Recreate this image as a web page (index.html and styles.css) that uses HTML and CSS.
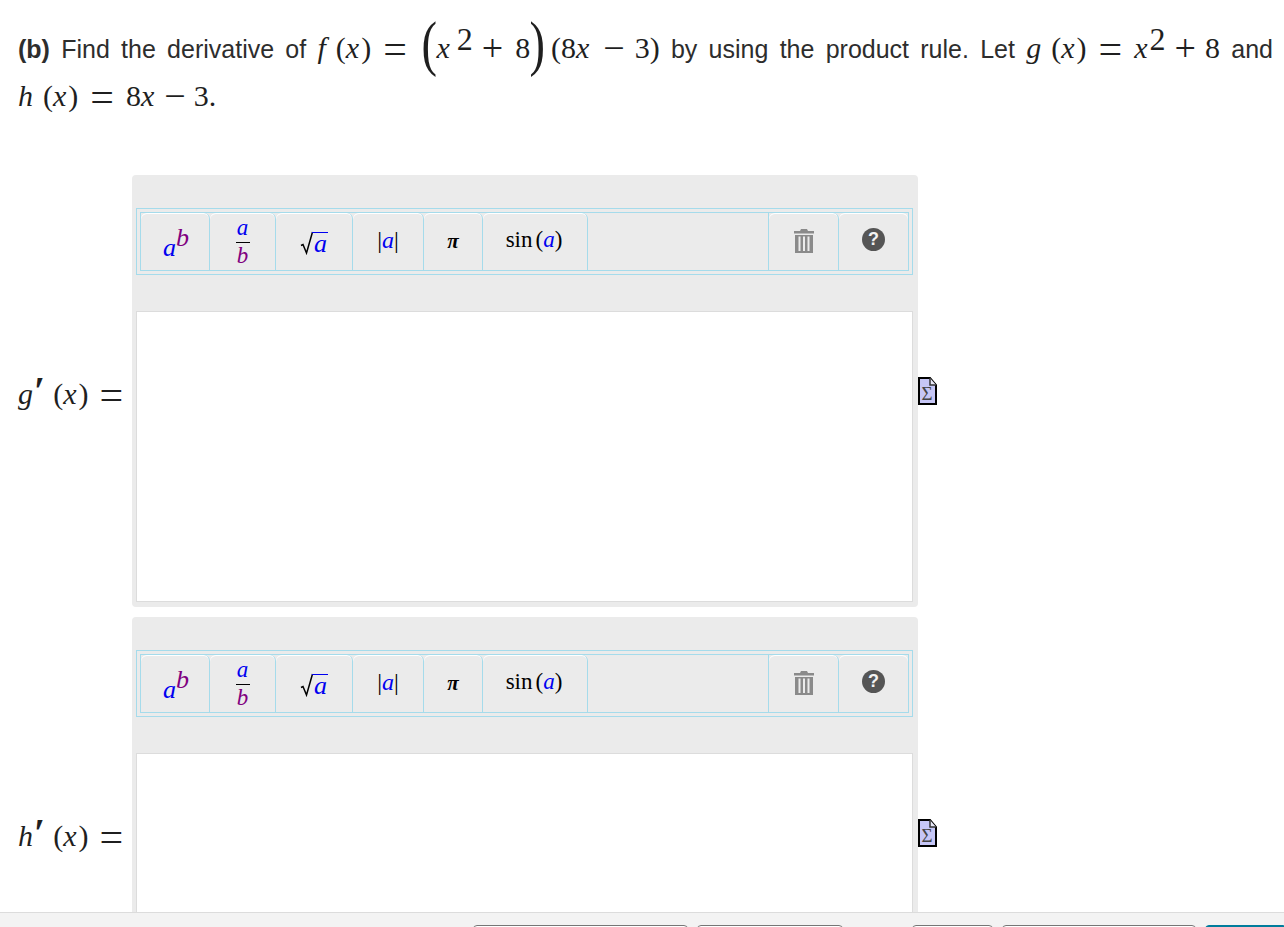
FILE: index.html
```html
<!DOCTYPE html>
<html lang="en">
<head>
<meta charset="utf-8">
<title>Product rule</title>
<link rel="stylesheet" href="styles.css">
</head>
<body>
<main class="page">
  <p class="question"><b>(b)</b> Find the derivative of <span class="m"><i>f</i><span class="th"></span>(<i>x</i>)<span class="rel pad">=</span><span class="big open">(</span><i>x</i><sup class="sq pad">2</sup><span class="bin pad">+</span>8<span class="big close">)</span><span class="th2"></span>(8<i>x</i><span class="bin minus pad">−</span>3)</span> by using the product rule. Let <span class="m"><i>g</i><span class="th"></span>(<i>x</i>)<span class="rel">=</span><i>x</i><sup class="sq">2</sup><span class="bin">+</span>8</span> and <span class="m"><i>h</i><span class="th"></span>(<i>x</i>)<span class="rel">=</span>8<i>x</i><span class="bin minus">−</span>3.</span></p>

  <section class="row">
    <div class="label m"><i>g</i><span class="prime">′</span><span class="th3"></span>(<i>x</i>)<span class="rel">=</span></div>
    <div class="panel">
      <div class="toolbar">
        <div class="tools">
          <div class="tool"><span class="sym pow"><i class="a">a</i><sup class="b">b</sup></span></div>
          <div class="tool"><span class="frac"><i class="a">a</i><i class="bar"></i><i class="b">b</i></span></div>
          <div class="tool"><span class="sym root"><svg class="radical" viewBox="0 0 13 24" width="13" height="24"><path d="M1 14.5 3 13.5 6.5 22 12.5 1" fill="none" stroke="#000" stroke-width="1.5"/></svg><i class="a over">a</i></span></div>
          <div class="tool"><span class="sym abs">|<i class="a">a</i>|</span></div>
          <div class="tool"><span class="sym pi"><i>π</i></span></div>
          <div class="tool"><span class="sym sin">sin<span class="th4"></span>(<i class="a">a</i>)</span></div>
          <div class="tool empty"></div>
          <div class="tool"><svg class="trash" viewBox="0 0 22 25" width="22" height="25"><path fill="#8a8a8a" d="M8 1h6l1 2h6v2.500H1V3h6zM2 7h18v18H2z"/><path fill="#ebebeb" d="M5.500 8.500h2v14.500h-2zM10 8.500h2v14.500h-2zM14.500 8.500h2v14.500h-2z"/></svg></div>
          <div class="tool last"><span class="help">?</span></div>
        </div>
      </div>
      <div class="editor"></div>
    </div>
    <div class="file"><svg class="sheet" viewBox="0 0 19 28" width="19" height="28"><path d="M1 1h11l6 7v19H1z" fill="#c6c6f6" stroke="#000" stroke-width="2"/><path d="M12 1v7h6" fill="#e8e8f8" stroke="#333" stroke-width="1.500"/><text class="sigma" x="9" y="23">Σ</text></svg></div>
  </section>

  <section class="row">
    <div class="label m"><i>h</i><span class="prime">′</span><span class="th3"></span>(<i>x</i>)<span class="rel">=</span></div>
    <div class="panel">
      <div class="toolbar">
        <div class="tools">
          <div class="tool"><span class="sym pow"><i class="a">a</i><sup class="b">b</sup></span></div>
          <div class="tool"><span class="frac"><i class="a">a</i><i class="bar"></i><i class="b">b</i></span></div>
          <div class="tool"><span class="sym root"><svg class="radical" viewBox="0 0 13 24" width="13" height="24"><path d="M1 14.5 3 13.5 6.5 22 12.5 1" fill="none" stroke="#000" stroke-width="1.5"/></svg><i class="a over">a</i></span></div>
          <div class="tool"><span class="sym abs">|<i class="a">a</i>|</span></div>
          <div class="tool"><span class="sym pi"><i>π</i></span></div>
          <div class="tool"><span class="sym sin">sin<span class="th4"></span>(<i class="a">a</i>)</span></div>
          <div class="tool empty"></div>
          <div class="tool"><svg class="trash" viewBox="0 0 22 25" width="22" height="25"><path fill="#8a8a8a" d="M8 1h6l1 2h6v2.500H1V3h6zM2 7h18v18H2z"/><path fill="#ebebeb" d="M5.500 8.500h2v14.500h-2zM10 8.500h2v14.500h-2zM14.500 8.500h2v14.500h-2z"/></svg></div>
          <div class="tool last"><span class="help">?</span></div>
        </div>
      </div>
      <div class="editor"></div>
    </div>
    <div class="file"><svg class="sheet" viewBox="0 0 19 28" width="19" height="28"><path d="M1 1h11l6 7v19H1z" fill="#c6c6f6" stroke="#000" stroke-width="2"/><path d="M12 1v7h6" fill="#e8e8f8" stroke="#333" stroke-width="1.500"/><text class="sigma" x="9" y="23">Σ</text></svg></div>
  </section>
</main>
<footer class="footer">
  <span class="fbtn w215"></span>
  <span class="fbtn w146"></span>
  <span class="fgap"></span>
  <span class="fbtn w81"></span>
  <span class="fbtn w194"></span>
  <span class="fbtn primary"></span>
</footer>
</body>
</html>
```
FILE: styles.css
```css
html, body {
  margin: 0;
  height: 927px;
  overflow: hidden;
  background: #fff;
}
body {
  position: relative;
  color: #2d2d2d;
  font-family: "Liberation Sans", Arial, sans-serif;
}
.page {
  padding: 25px 11px 0 18px;
}
.question {
  margin: 0 0 54px;
  font-size: 25px;
  line-height: 48px;
  text-align: justify;
}
.question b { font-weight: 700; }
.m {
  font-family: "Liberation Serif", "Times New Roman", serif;
  font-size: 30px;
  line-height: 0;
  color: #1f1f1f;
  white-space: nowrap;
}
.m i {
  font-style: italic;
  letter-spacing: 2px;
}
.rel {
  margin: 0 12px;
  font-size: 42px;
  line-height: 0;
  font-weight: 400;
  vertical-align: -5px;
}
.rel.pad { margin-right: 15px; }
.bin {
  margin: 0 9px;
  font-size: 38px;
  line-height: 0;
  vertical-align: -3px;
}
.bin.pad { margin-right: 12px; }
.minus {
  margin: 0 8px;
  vertical-align: -3px;
}
.minus.pad { margin: 0 10px 0 12px; }
.th { margin-left: 8px; }
.th2 { margin-left: 6px; }
.th3 { margin-left: 11px; }
.big {
  display: inline-block;
  font-size: 62px;
  line-height: 0;
  font-weight: 400;
  vertical-align: -6px;
  transform: scaleX(.75);
}
.open { margin: 0 -3px 0 -3px; }
.close { margin: 0 -3px 0 -3px; }
.sq {
  font-size: 32px;
  line-height: 0;
  vertical-align: 8px;
}
.sq.pad { margin-left: 5px; }
.prime {
  font-size: 40px;
  font-weight: 700;
  line-height: 0;
  margin-left: -1px;
}
.row {
  display: grid;
  grid-template-columns: 114px 786px 19px;
  align-items: center;
  margin-bottom: 10px;
}
.label {
  padding-top: 6px;
  line-height: 34px;
}
.label .rel { margin: 0 0 0 11px; }
.label .th3 { margin-left: 8px; }
.panel {
  box-sizing: border-box;
  height: 432px;
  padding: 33px 5px 5px 4px;
  background: #ebebeb;
  border-radius: 4px;
}
.toolbar {
  padding: 3px;
  border: 1px solid #a5dbeb;
}
.tools {
  display: grid;
  grid-template-columns: 69px 66px 77px 71px 59px 105px 1fr 70px 69px;
  height: 59px;
  border: 1px solid #a5dbeb;
  box-sizing: border-box;
}
.tool {
  display: flex;
  align-items: center;
  justify-content: center;
  border-right: 1px solid #a5dbeb;
  border-radius: 6px 6px 0 0;
  box-shadow: inset 0 1px 0 #fff;
  font-family: "Liberation Serif", "Times New Roman", serif;
  color: #000;
}
.tool.empty {
  box-shadow: none;
  border-radius: 0;
}
.tool.last { border-right: 0; }
.sym {
  display: inline-flex;
  align-items: baseline;
  white-space: nowrap;
}
.a { color: #0000f0; }
.b { color: #800080; }
.pow { font-size: 26px; padding: 12px 0 0 2px; }
.pow sup {
  display: inline-block;
  font-size: 26px;
  font-style: italic;
  line-height: 0;
  vertical-align: baseline;
  transform: translateY(-10px);
}
.frac {
  display: flex;
  flex-direction: column;
  align-items: center;
  font-size: 23px;
  line-height: 22px;
}
.bar {
  width: 14px;
  height: 1px;
  margin: 3px 0 2px;
  background: #000;
}
.root { font-size: 26px; align-items: flex-end; padding-top: 1px; }
.radical { display: block; margin-bottom: -1px; }
.over {
  border-top: 1px solid #0000f0;
  line-height: 21px;
  padding: 0 1px 0 2px;
  margin-left: -1px;
}
.abs { font-size: 24px; padding-bottom: 3px; }
.pi { font-size: 21px; font-weight: 700; }
.sin { font-size: 23px; padding: 0 2px 3px 0; }
.th4 { margin-left: 3px; }
.trash { display: block; margin-top: -3px; }
.help {
  display: flex;
  align-items: center;
  justify-content: center;
  width: 23px;
  height: 23px;
  margin-top: -4px;
  border-radius: 50%;
  background: #555;
  color: #f2f2f2;
  font-family: "Liberation Sans", Arial, sans-serif;
  font-size: 18px;
  font-weight: 700;
}
.editor {
  box-sizing: border-box;
  height: 291px;
  margin-top: 36px;
  background: #fff;
  border: 1px solid #dcdcdc;
}
.file { display: flex; }
.sheet { display: block; }
.sigma {
  font-family: "Liberation Serif", serif;
  font-size: 19px;
  fill: #444;
  text-anchor: middle;
}
.footer {
  position: absolute;
  left: 0;
  right: 0;
  bottom: 0;
  height: 15px;
  display: flex;
  align-items: flex-start;
  gap: 9px;
  padding: 12px 0 0 473px;
  box-sizing: border-box;
  background: #f3f3f3;
  border-top: 1px solid #dcdcdc;
  overflow: hidden;
}
.fbtn {
  display: block;
  height: 20px;
  box-sizing: border-box;
  flex: none;
  background: #fff;
  border: 1px solid #767676;
  border-radius: 4px;
}
.w215 { width: 215px; }
.w146 { width: 146px; }
.fgap { width: 51px; flex: none; }
.w81 { width: 81px; }
.w194 { width: 194px; }
.primary {
  flex: 1;
  background: #007c9c;
  border-color: #007c9c;
  border-radius: 4px 0 0 0;
}
```
